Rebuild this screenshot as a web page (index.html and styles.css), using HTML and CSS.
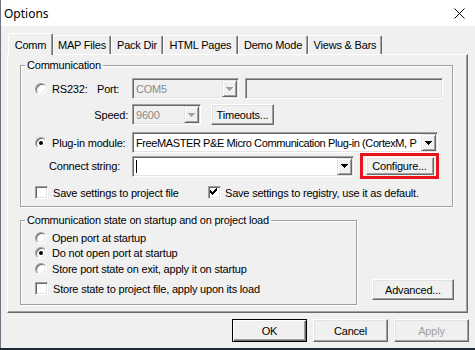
FILE: index.html
```html
<!DOCTYPE html>
<html lang="en">
<head>
    <meta charset="UTF-8">
    <title>Options</title>
    <link rel="stylesheet" href="styles.css">
</head>
<body>

<div class="window">
    <div class="titlebar">
        <span class="title">Options</span>
        <svg class="close" width="11" height="11" viewBox="0 0 11 11">
            <path d="M0.5 0.5L10.5 10.5M10.5 0.5L0.5 10.5" stroke="#000" stroke-width="1" fill="none"/>
        </svg>
    </div>

    <div class="content">
        <div class="tabs">
            <div class="tab active tab-comm">Comm</div>
            <div class="tab tab-map">MAP Files</div>
            <div class="tab tab-pack">Pack Dir</div>
            <div class="tab tab-html">HTML Pages</div>
            <div class="tab tab-demo">Demo Mode</div>
            <div class="tab tab-views">Views &amp; Bars</div>
        </div>

        <div class="panel">
            <fieldset class="group group-comm">
                <legend>Communication</legend>

                <div class="row row-port">
                    <span class="radio"></span>
                    <span class="lbl lbl-rs">RS232:</span>
                    <span class="lbl lbl-port">Port:</span>
                    <div class="combo disabled combo-port">
                        <span class="val">COM5</span>
                        <span class="drop"><svg width="7" height="4" viewBox="0 0 7 4"><path d="M0 0h7v1h-1v1h-1v1h-1v1h-1v-1h-1v-1h-1v-1h-1z"/></svg></span>
                    </div>
                    <div class="edit disabled edit-port"></div>
                </div>

                <div class="row row-speed">
                    <span class="lbl lbl-speed">Speed:</span>
                    <div class="combo disabled combo-speed">
                        <span class="val">9600</span>
                        <span class="drop"><svg width="7" height="4" viewBox="0 0 7 4"><path d="M0 0h7v1h-1v1h-1v1h-1v1h-1v-1h-1v-1h-1v-1h-1z"/></svg></span>
                    </div>
                    <button class="btn btn-timeouts">Timeouts...</button>
                </div>

                <div class="row row-plugin">
                    <span class="radio on"></span>
                    <span class="lbl lbl-plugin">Plug-in module:</span>
                    <div class="combo combo-plugin">
                        <span class="val">FreeMASTER P&amp;E Micro Communication Plug-in (CortexM, P</span>
                        <span class="drop"><svg width="7" height="4" viewBox="0 0 7 4"><path d="M0 0h7v1h-1v1h-1v1h-1v1h-1v-1h-1v-1h-1v-1h-1z"/></svg></span>
                    </div>
                </div>

                <div class="row row-connect">
                    <span class="lbl lbl-connect">Connect string:</span>
                    <div class="combo combo-connect">
                        <span class="val"><span class="caret"></span></span>
                        <span class="drop"><svg width="7" height="4" viewBox="0 0 7 4"><path d="M0 0h7v1h-1v1h-1v1h-1v1h-1v-1h-1v-1h-1v-1h-1z"/></svg></span>
                    </div>
                    <div class="highlight">
                        <button class="btn btn-configure">Configure...</button>
                    </div>
                </div>

                <div class="row row-save">
                    <span class="chk-item chk-project">
                        <span class="check"></span>
                        <span>Save settings to project file</span>
                    </span>
                    <span class="chk-item">
                        <span class="check"><svg width="11" height="11" viewBox="0 0 11 11"><path d="M1.5 3v3M2.5 4v3M3.5 5v3M4.5 4v3M5.5 3v3M6.5 2v3M7.5 1v3" stroke="#000" stroke-width="1"/></svg></span>
                        <span>Save settings to registry, use it as default.</span>
                    </span>
                </div>
            </fieldset>

            <div class="lower">
                <fieldset class="group group-state">
                    <legend>Communication state on startup and on project load</legend>
                    <div class="opt opt-first"><span class="radio"></span><span>Open port at startup</span></div>
                    <div class="opt"><span class="radio on"></span><span>Do not open port at startup</span></div>
                    <div class="opt opt-third"><span class="radio"></span><span>Store port state on exit, apply it on startup</span></div>
                    <div class="opt opt-check"><span class="check"></span><span>Store state to project file, apply upon its load</span></div>
                </fieldset>
                <button class="btn btn-advanced">Advanced...</button>
            </div>
        </div>

        <div class="actions">
            <button class="btn btn-default">OK</button>
            <button class="btn">Cancel</button>
            <button class="btn btn-disabled">Apply</button>
        </div>
    </div>
</div>

</body>
</html>
```

FILE: styles.css
```css
body {
    margin: 0;
    background-color: #1d2835;
    font-family: "Liberation Sans", Arial, sans-serif;
    font-size: 11px;
    letter-spacing: -0.2px;
    color: #000;
}
.window {
    width: 474px;
    height: 348px;
    border-left: 1px solid #6c7580;
    background-color: #f0f0f0;
}
.titlebar {
    height: 26px;
    background: #fff;
    display: flex;
    align-items: center;
    justify-content: space-between;
    padding: 0 10px 0 3px;
}
.title {
    font-family: "Noto Sans", "Open Sans", sans-serif;
    font-size: 12px;
    letter-spacing: 0;
}
.content {
    padding: 7px 6px 0 6px;
}

/* tabs */
.tabs {
    display: flex;
    align-items: flex-end;
    height: 21px;
    padding-left: 1px;
}
.tab {
    box-sizing: border-box;
    height: 19px;
    border: 1px solid;
    border-color: #fff #696969 transparent #fff;
    border-bottom: none;
    border-radius: 2px 2px 0 0;
    box-shadow: inset -1px 0 #a0a0a0;
    display: flex;
    align-items: center;
    justify-content: center;
}
.tab.active {
    height: 22px;
    margin-bottom: -1px;
    background-color: #f0f0f0;
    position: relative;
    z-index: 1;
}
.tab-comm { width: 45px; }
.tab-map { width: 58px; }
.tab-pack { width: 52px; }
.tab-html { width: 75px; }
.tab-demo { width: 70px; }
.tab-views { width: 74px; }

.panel {
    box-sizing: border-box;
    height: 259px;
    width: 461px;
    border: 1px solid;
    border-color: #fff #696969 #696969 #fff;
    box-shadow: inset -1px -1px #a0a0a0;
    padding: 4px 0 0 12px;
}

/* group boxes */
.group {
    box-sizing: border-box;
    margin: 0;
    padding: 0 0 6px 0;
    border: 1px solid #a0a0a0;
    box-shadow: inset 1px 1px #fff, 1px 1px #fff;
}
.group legend {
    padding: 0 2px;
    margin-left: 4px;
    line-height: 13px;
}
.group-comm { width: 433px; }
.group-state {
    width: 337px;
    padding-bottom: 8px;
}

.row {
    display: flex;
    align-items: center;
    height: 21px;
    padding-left: 14px;
}
.row-port { margin-top: 6px; }
.row-speed { margin-top: 5px; }
.row-plugin { margin-top: 7px; }
.row-connect { height: 26px; }
.row-save {
    height: 15px;
    margin-top: 6px;
}

.lbl { white-space: nowrap; }
.lbl-rs { width: 45px; margin-left: 5px; }
.lbl-port { width: 35px; }
.lbl-speed {
    width: 97px;
    text-align: right;
    padding-right: 4px;
    box-sizing: border-box;
}
.lbl-plugin { width: 80px; margin-left: 5px; }
.lbl-connect {
    width: 97px;
    padding-left: 14px;
    box-sizing: border-box;
}

/* radio / check */
.radio {
    box-sizing: border-box;
    width: 12px;
    height: 12px;
    flex: none;
    border-radius: 50%;
    background: #fff;
    border: 1px solid;
    border-color: #a0a0a0 #fff #fff #a0a0a0;
    box-shadow: inset 1px 1px #696969, inset -1px -1px #e3e3e3;
    display: flex;
    align-items: center;
    justify-content: center;
}
.radio.on::after {
    content: "";
    width: 4px;
    height: 4px;
    border-radius: 50%;
    background: #000;
}
.check {
    box-sizing: border-box;
    width: 13px;
    height: 13px;
    flex: none;
    background: #fff;
    border: 1px solid;
    border-color: #a0a0a0 #fff #fff #a0a0a0;
    box-shadow: inset 1px 1px #696969, inset -1px -1px #e3e3e3;
    display: flex;
}
.check svg { display: block; }
.chk-item {
    display: flex;
    align-items: center;
    gap: 5px;
    white-space: nowrap;
}
.chk-project { width: 173px; }
.chk-item + .chk-item { gap: 4px; }

/* combos and edits */
.combo, .edit {
    box-sizing: border-box;
    height: 21px;
    border: 1px solid;
    border-color: #a0a0a0 #fff #fff #a0a0a0;
    box-shadow: inset 1px 1px #696969, inset -1px -1px #e3e3e3;
    background: #fff;
    display: flex;
    align-items: center;
    padding: 1px;
}
.combo.disabled, .edit.disabled {
    background: #f0f0f0;
    color: #8a8a8a;
}
.combo .val {
    flex: 1;
    overflow: hidden;
    white-space: nowrap;
    padding-left: 2px;
    display: flex;
    align-items: center;
}
.combo-plugin .val { letter-spacing: -0.4px; }
.drop {
    box-sizing: border-box;
    width: 15px;
    height: 17px;
    flex: none;
    background: #f0f0f0;
    border: 1px solid;
    border-color: #e3e3e3 #696969 #696969 #e3e3e3;
    box-shadow: inset 1px 1px #fff, inset -1px -1px #a0a0a0;
    display: flex;
    align-items: center;
    justify-content: center;
    fill: #000;
}
.disabled .drop { fill: #a0a0a0; }
.caret {
    width: 1px;
    height: 13px;
    background: #000;
}
.combo-port { width: 107px; }
.edit-port { width: 198px; margin-left: 6px; }
.combo-speed { width: 69px; }
.combo-plugin { width: 306px; }
.combo-connect { width: 222px; }

/* buttons */
.btn {
    box-sizing: border-box;
    height: 21px;
    padding: 0;
    font: inherit;
    letter-spacing: inherit;
    color: #000;
    background: #f0f0f0;
    border: 1px solid;
    border-color: #fff #696969 #696969 #fff;
    box-shadow: inset -1px -1px #a0a0a0, inset 1px 1px #e3e3e3;
}
.btn-timeouts { width: 63px; margin-left: 10px; }
.highlight {
    box-sizing: border-box;
    width: 79px;
    height: 26px;
    margin-left: 6px;
    border: 3px solid #e8141c;
    display: flex;
    align-items: center;
    justify-content: center;
}
.btn-configure { width: 68px; height: 18px; }

.lower {
    display: flex;
    align-items: flex-end;
    margin-top: 7px;
}
.opt {
    display: flex;
    align-items: center;
    gap: 5px;
    height: 15px;
    padding-left: 14px;
    white-space: nowrap;
}
.opt-first { margin-top: 3px; }
.opt-third { margin-top: 1px; }
.opt-check { margin-top: 5px; }
.btn-advanced {
    width: 82px;
    margin-left: 15px;
    margin-bottom: 5px;
}

.actions {
    display: flex;
    justify-content: flex-end;
    gap: 6px;
    margin-top: 6px;
}
.actions .btn {
    width: 75px;
    height: 23px;
}
.btn-default {
    border-color: #000;
    box-shadow: inset 1px 1px #fff, inset -1px -1px #696969, inset -2px -2px #a0a0a0;
}
.btn-disabled { color: #a0a0a0; }
```
